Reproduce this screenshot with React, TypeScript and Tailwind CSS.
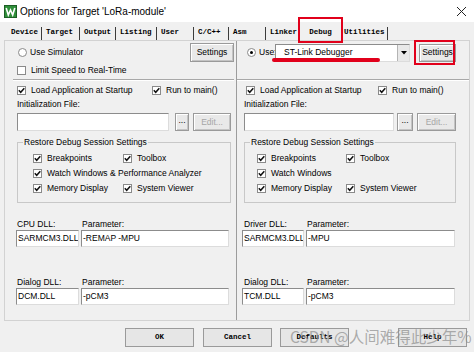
import type { ReactNode } from "react";

const sans = "font-['Liberation_Sans',Arial,sans-serif]";
const mono = "font-['Liberation_Mono','Courier_New',monospace]";

function Check({ on = true }: { on?: boolean }) {
  return (
    <span className="flex h-[9px] w-[9px] shrink-0 items-center justify-center border border-[#8a8a8a] bg-white">
      {on ? (
        <svg width="7" height="7" viewBox="0 0 7 7">
          <path d="M0.8 3.3 L2.7 5.3 L6.3 1.2" fill="none" stroke="#111" strokeWidth="1.5" />
        </svg>
      ) : null}
    </span>
  );
}

function Radio({ on }: { on?: boolean }) {
  return (
    <span className="flex h-[9px] w-[9px] shrink-0 items-center justify-center rounded-full border border-[#8a8a8a] bg-white">
      {on ? <span className="h-[3px] w-[3px] rounded-full bg-black" /> : null}
    </span>
  );
}

function CheckRow({ label, className = "", on = true }: { label: string; className?: string; on?: boolean }) {
  return (
    <div className={`flex items-center gap-[5px] whitespace-nowrap ${className}`}>
      <Check on={on} />
      <span>{label}</span>
    </div>
  );
}

function Field({ value, className = "" }: { value?: string; className?: string }) {
  return (
    <div
      className={`flex items-center overflow-hidden whitespace-nowrap border border-t-[#8c8c8c] border-l-[#8c8c8c] border-r-[#dcdcdc] border-b-[#dcdcdc] bg-white pl-[1px] ${className}`}
    >
      {value}
    </div>
  );
}

function Btn({ children, className = "", disabled }: { children: ReactNode; className?: string; disabled?: boolean }) {
  return (
    <div
      className={`flex items-center justify-center border border-[#9a9a9a] bg-[#e9e9e9] shadow-[inset_1px_1px_#ffffff,inset_-1px_-1px_#c4c4c4] ${
        disabled ? "text-[#a6a6a6]" : "text-black"
      } ${className}`}
    >
      {children}
    </div>
  );
}

function Etched({ className = "" }: { className?: string }) {
  return <div className={`h-[2px] border-t border-b border-t-[#a8a8a8] border-b-white ${className}`} />;
}

function RestoreGroup({
  width,
  pad,
  legendPos,
  firstW,
  middle,
}: {
  width: string;
  pad: string;
  legendPos: string;
  firstW: string;
  middle: string;
}) {
  return (
    <fieldset className={`mt-[6px] border border-[#c8c8c8] pb-[6px] pt-[4px] ${width} ${pad}`}>
      <legend className={`px-[1px] leading-[10px] ${legendPos}`}>Restore Debug Session Settings</legend>
      <div className="flex h-[15px] items-center">
        <CheckRow label="Breakpoints" className={firstW} />
        <CheckRow label="Toolbox" />
      </div>
      <div className="flex h-[15px] items-center">
        <CheckRow label={middle} />
      </div>
      <div className="flex h-[15px] items-center">
        <CheckRow label="Memory Display" className={firstW} />
        <CheckRow label="System Viewer" />
      </div>
    </fieldset>
  );
}

const tabs = [
  { t: "Device", w: "w-[35px]" },
  { t: "Target", w: "w-[38px]" },
  { t: "Output", w: "w-[36px]" },
  { t: "Listing", w: "w-[41px]" },
  { t: "User", w: "w-[37px]" },
  { t: "C/C++", w: "w-[35px]" },
  { t: "Asm", w: "w-[37px]" },
  { t: "Linker", w: "w-[34px]" },
];

export default function App() {
  return (
    <div className={`relative h-[352px] w-[474px] overflow-hidden bg-[#f0f0f0] text-[8.5px] text-black ${sans}`}>
      {/* title bar */}
      <div className="flex h-[22px] items-center bg-white pl-[4px] pr-[7px]">
        <svg width="13" height="13" viewBox="0 0 13 13">
          <rect width="13" height="13" fill="#2f8f3a" />
          <rect x="0.5" y="0.5" width="12" height="12" fill="none" stroke="#1d5e25" />
          <path d="M2.2 3 L4.3 10 L6.5 5 L8.7 10 L10.8 3" fill="none" stroke="#fff" strokeWidth="1.6" />
        </svg>
        <span className="ml-[3px] text-[10px]">Options for Target 'LoRa-module'</span>
        <svg className="ml-auto" width="11" height="11" viewBox="0 0 11 11">
          <path d="M1 1 L10 10 M10 1 L1 10" stroke="#222" strokeWidth="1" />
        </svg>
      </div>

      {/* tab strip */}
      <div className={`flex h-[18px] items-end pl-[7px] text-[7.5px] font-bold ${mono}`}>
        {tabs.map((tab) => (
          <div key={tab.t} className={`flex h-[13px] items-center border-r border-[#3c3c3c] pl-[4px] pb-[1px] ${tab.w}`}>
            {tab.t}
          </div>
        ))}
        <div className="flex h-[17px] w-[41px] items-start justify-center pt-[4px]">Debug</div>
        <div className="flex h-[13px] w-[47px] items-center border-r border-[#3c3c3c] pl-[3px] pb-[1px]">Utilities</div>
      </div>

      {/* tab page */}
      <div className="mx-[4px] flex h-[281px] border border-[#d2d2d2]">
        {/* left half */}
        <div className="flex w-[232px] flex-col border-r border-[#9c9c9c] pl-[12px] pr-[2px] pt-[2px]">
          <div className="flex h-[19px] items-center">
            <span className="ml-[1px]">
              <Radio />
            </span>
            <span className="ml-[3px]">Use Simulator</span>
            <Btn className="ml-auto h-[19px] w-[44px]">Settings</Btn>
          </div>
          <div className="flex h-[16px] items-center">
            <CheckRow label="Limit Speed to Real-Time" on={false} />
          </div>
          <Etched className="-ml-[4px] mt-[1px]" />
          <div className="mt-[2px] flex h-[14px] items-center">
            <CheckRow label="Load Application at Startup" className="w-[135px]" />
            <CheckRow label="Run to main()" />
          </div>
          <div className="flex h-[14px] items-center">Initialization File:</div>
          <div className="mt-[2px] flex h-[18px] items-center">
            <Field className="h-[18px] w-[152px]" />
            <Btn className="ml-[6px] h-[18px] w-[14px] pb-[3px]">...</Btn>
            <Btn disabled className="ml-[4px] h-[18px] w-[38px]">
              Edit...
            </Btn>
          </div>
          <RestoreGroup
            width="w-[214px]"
            pad="pl-[15px]"
            legendPos="-ml-[10px]"
            firstW="w-[90px]"
            middle="Watch Windows & Performance Analyzer"
          />
          <div className="mt-[15px] flex h-[12px] items-center">
            <span className="w-[65px]">CPU DLL:</span>
            <span>Parameter:</span>
          </div>
          <div className="flex h-[17px]">
            <Field value="SARMCM3.DLL" className="-ml-[1px] h-[17px] w-[63px]" />
            <Field value="-REMAP -MPU" className="ml-[2px] h-[17px] w-[148px]" />
          </div>
          <div className="mt-[29px] flex h-[12px] items-center">
            <span className="w-[65px]">Dialog DLL:</span>
            <span>Parameter:</span>
          </div>
          <div className="flex h-[17px]">
            <Field value="DCM.DLL" className="-ml-[1px] h-[17px] w-[63px]" />
            <Field value="-pCM3" className="ml-[2px] h-[17px] w-[148px]" />
          </div>
        </div>

        {/* right half */}
        <div className="flex flex-1 flex-col pl-[7px] pt-[2px]">
          <div className="flex h-[19px] items-center">
            <span className="ml-[3px]">
              <Radio on />
            </span>
            <span className="ml-[3px] w-[16px]">Use:</span>
            <div className="flex h-[18px] w-[135px] items-center border border-t-[#8c8c8c] border-l-[#8c8c8c] border-r-[#dcdcdc] border-b-[#dcdcdc] bg-white">
              <span className="pl-[8px]">ST-Link Debugger</span>
              <div className="ml-auto flex h-full w-[12px] items-center justify-center border-l border-[#b4b4b4] bg-[#e9e9e9]">
                <svg width="6" height="4" viewBox="0 0 6 4">
                  <path d="M0 0 H6 L3 3.5 Z" fill="#000" />
                </svg>
              </div>
            </div>
            <Btn className="ml-[9px] h-[18px] w-[37px]">Settings</Btn>
          </div>
          <div className="h-[16px]" />
          <Etched className="-ml-[7px] mt-[1px]" />
          <div className="mt-[2px] flex h-[14px] items-center">
            <CheckRow label="Load Application at Startup" className="ml-[2px] w-[132px]" />
            <CheckRow label="Run to main()" />
          </div>
          <div className="flex h-[14px] items-center">Initialization File:</div>
          <div className="mt-[2px] flex h-[18px] items-center">
            <Field className="h-[18px] w-[150px]" />
            <Btn className="ml-[3px] h-[18px] w-[16px] pb-[3px]">...</Btn>
            <Btn disabled className="ml-[4px] h-[18px] w-[39px]">
              Edit...
            </Btn>
          </div>
          <RestoreGroup
            width="w-[212px]"
            pad="pl-[12px]"
            legendPos="-ml-[7px]"
            firstW="w-[89px]"
            middle="Watch Windows"
          />
          <div className="mt-[15px] flex h-[12px] items-center">
            <span className="w-[63px]">Driver DLL:</span>
            <span>Parameter:</span>
          </div>
          <div className="flex h-[17px]">
            <Field value="SARMCM3.DLL" className="-ml-[2px] h-[17px] w-[62px]" />
            <Field value="-MPU" className="ml-[2px] h-[17px] w-[149px]" />
          </div>
          <div className="mt-[29px] flex h-[12px] items-center">
            <span className="w-[63px]">Dialog DLL:</span>
            <span>Parameter:</span>
          </div>
          <div className="flex h-[17px]">
            <Field value="TCM.DLL" className="-ml-[2px] h-[17px] w-[62px]" />
            <Field value="-pCM3" className="ml-[2px] h-[17px] w-[149px]" />
          </div>
        </div>
      </div>

      {/* bottom buttons */}
      <div className={`mt-[7px] flex h-[19px] pl-[125px] text-[7.5px] font-bold ${mono}`}>
        <div className="flex w-[69px] items-center justify-center border border-[#9a9a9a] bg-[#e6e6e6]">OK</div>
        <div className="ml-[9px] flex w-[69px] items-center justify-center border border-[#9a9a9a] bg-[#e6e6e6]">Cancel</div>
        <div className="ml-[8px] flex w-[69px] items-center justify-center border border-[#9a9a9a] bg-[#e6e6e6]">Defaults</div>
        <div className="ml-[49px] flex w-[69px] items-center justify-center border border-[#9a9a9a] bg-[#e6e6e6]">Help</div>
      </div>

      {/* red annotations */}
      <div className="absolute left-[298px] top-[17px] h-[26px] w-[45px] border-[2.5px] border-[#e1001b]" />
      <div className="absolute left-[272px] top-[58px] h-[4px] w-[108px] rounded-full bg-[#e1001b]" />
      <div className="absolute left-[414px] top-[40px] h-[25px] w-[41px] border-[2.5px] border-[#e1001b]" />

      {/* watermark */}
      <div className="absolute left-[290px] top-[326px] whitespace-nowrap text-[15.5px] leading-[20px] text-[#8c8c8c]/70 font-['Noto_Sans_CJK_SC','Noto_Sans',sans-serif]">
        CSDN @人间难得此少年%
      </div>
    </div>
  );
}
